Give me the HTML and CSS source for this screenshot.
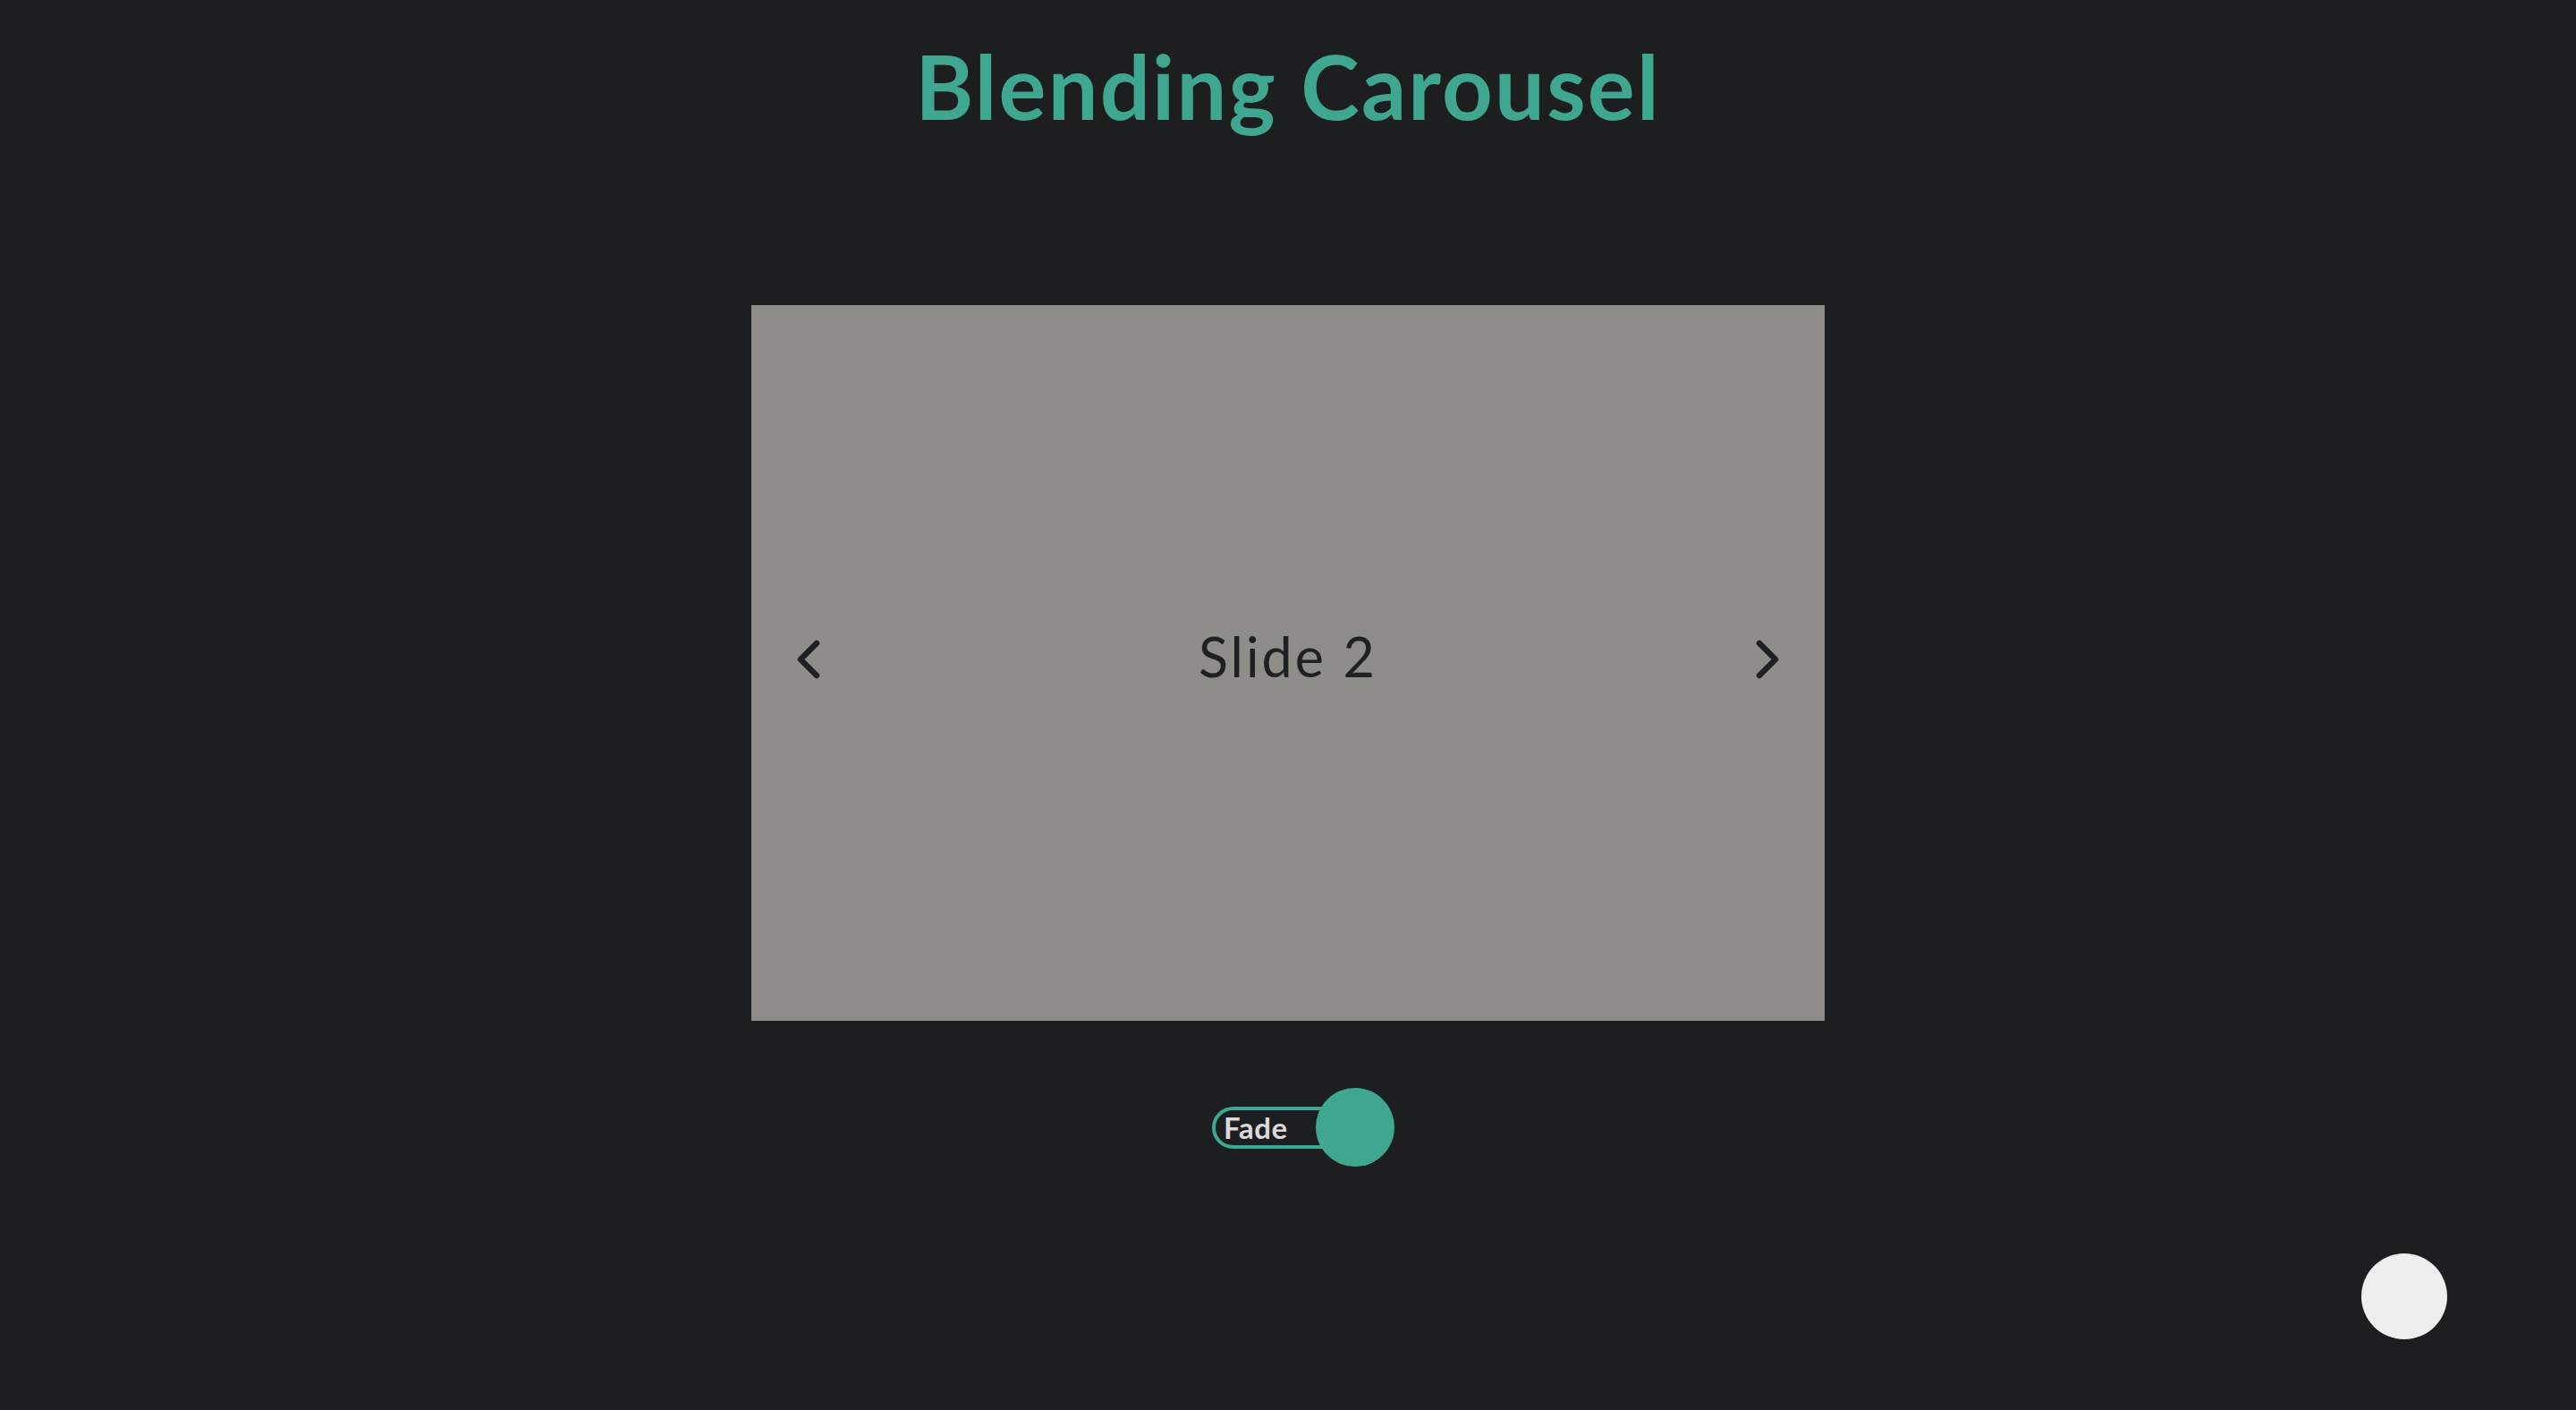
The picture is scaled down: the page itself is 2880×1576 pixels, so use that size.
FILE: index.html
```html
<!DOCTYPE html>
<html lang="en">
<head>
<meta charset="utf-8">
<title>Blending Carousel</title>
<link rel="stylesheet" href="styles.css">
</head>
<body>
<h1 class="title">Blending Carousel</h1>
<main class="stage">
  <section class="carousel">
    <button class="nav nav-prev" aria-label="Previous slide">
      <svg width="40" height="60" viewBox="0 0 40 60"><path d="M33 12 L15 30 L33 48" /></svg>
    </button>
    <div class="slide-label">Slide 2</div>
    <button class="nav nav-next" aria-label="Next slide">
      <svg width="40" height="60" viewBox="0 0 40 60"><path d="M7 12 L25 30 L7 48" /></svg>
    </button>
  </section>
  <div class="toggle-row">
    <div class="toggle">
      <div class="track"><span class="track-label">Fade</span></div>
      <div class="knob"></div>
    </div>
  </div>
</main>
<button class="fab" aria-label="Theme"></button>
</body>
</html>
```

FILE: styles.css
```css
html, body {
  margin: 0;
  padding: 0;
}
body {
  background: #1d1e20;
  font-family: "Lato", "Liberation Sans", sans-serif;
  min-height: 1576px;
}
.title {
  margin: 36px 0 0;
  font-size: 99px;
  line-height: 120px;
  font-weight: 700;
  text-align: center;
  color: #3fa68f;
  letter-spacing: 2.2px;
}
.stage {
  display: flex;
  flex-direction: column;
  align-items: center;
  padding-top: 185px;
}
.carousel {
  position: relative;
  width: 1200px;
  height: 800px;
  background: #8e8d8a;
  display: flex;
  align-items: center;
  justify-content: center;
}
.slide-label {
  font-size: 61px;
  font-weight: 400;
  color: #1f2022;
  letter-spacing: 3px;
  margin-bottom: 15px;
}
.nav {
  position: absolute;
  top: 366px;
  width: 40px;
  height: 60px;
  padding: 0;
  border: 0;
  background: transparent;
}
.nav svg {
  display: block;
}
.nav path {
  fill: none;
  stroke: #1f2022;
  stroke-width: 6.5;
  stroke-linecap: round;
  stroke-linejoin: round;
}
.nav-prev { left: 40px; }
.nav-next { right: 40px; }
.toggle-row {
  margin-top: 75px;
  display: flex;
  justify-content: center;
}
.toggle {
  position: relative;
  width: 170px;
  height: 88px;
  display: flex;
  align-items: center;
}
.track {
  box-sizing: border-box;
  width: 170px;
  height: 47px;
  border: 4px solid #3fa68f;
  border-radius: 24px;
  padding-left: 9px;
  display: flex;
  align-items: center;
}
.track-label {
  font-size: 33px;
  font-weight: 700;
  color: #d9d9d9;
  letter-spacing: 0.5px;
  line-height: 1;
}
.knob {
  position: absolute;
  left: 116px;
  top: 0;
  width: 88px;
  height: 88px;
  border-radius: 50%;
  background: #3fa68f;
}
.fab {
  position: fixed;
  right: 144px;
  bottom: 79px;
  width: 96px;
  height: 96px;
  border-radius: 50%;
  border: 0;
  padding: 0;
  background: #eeeeee;
}
```
